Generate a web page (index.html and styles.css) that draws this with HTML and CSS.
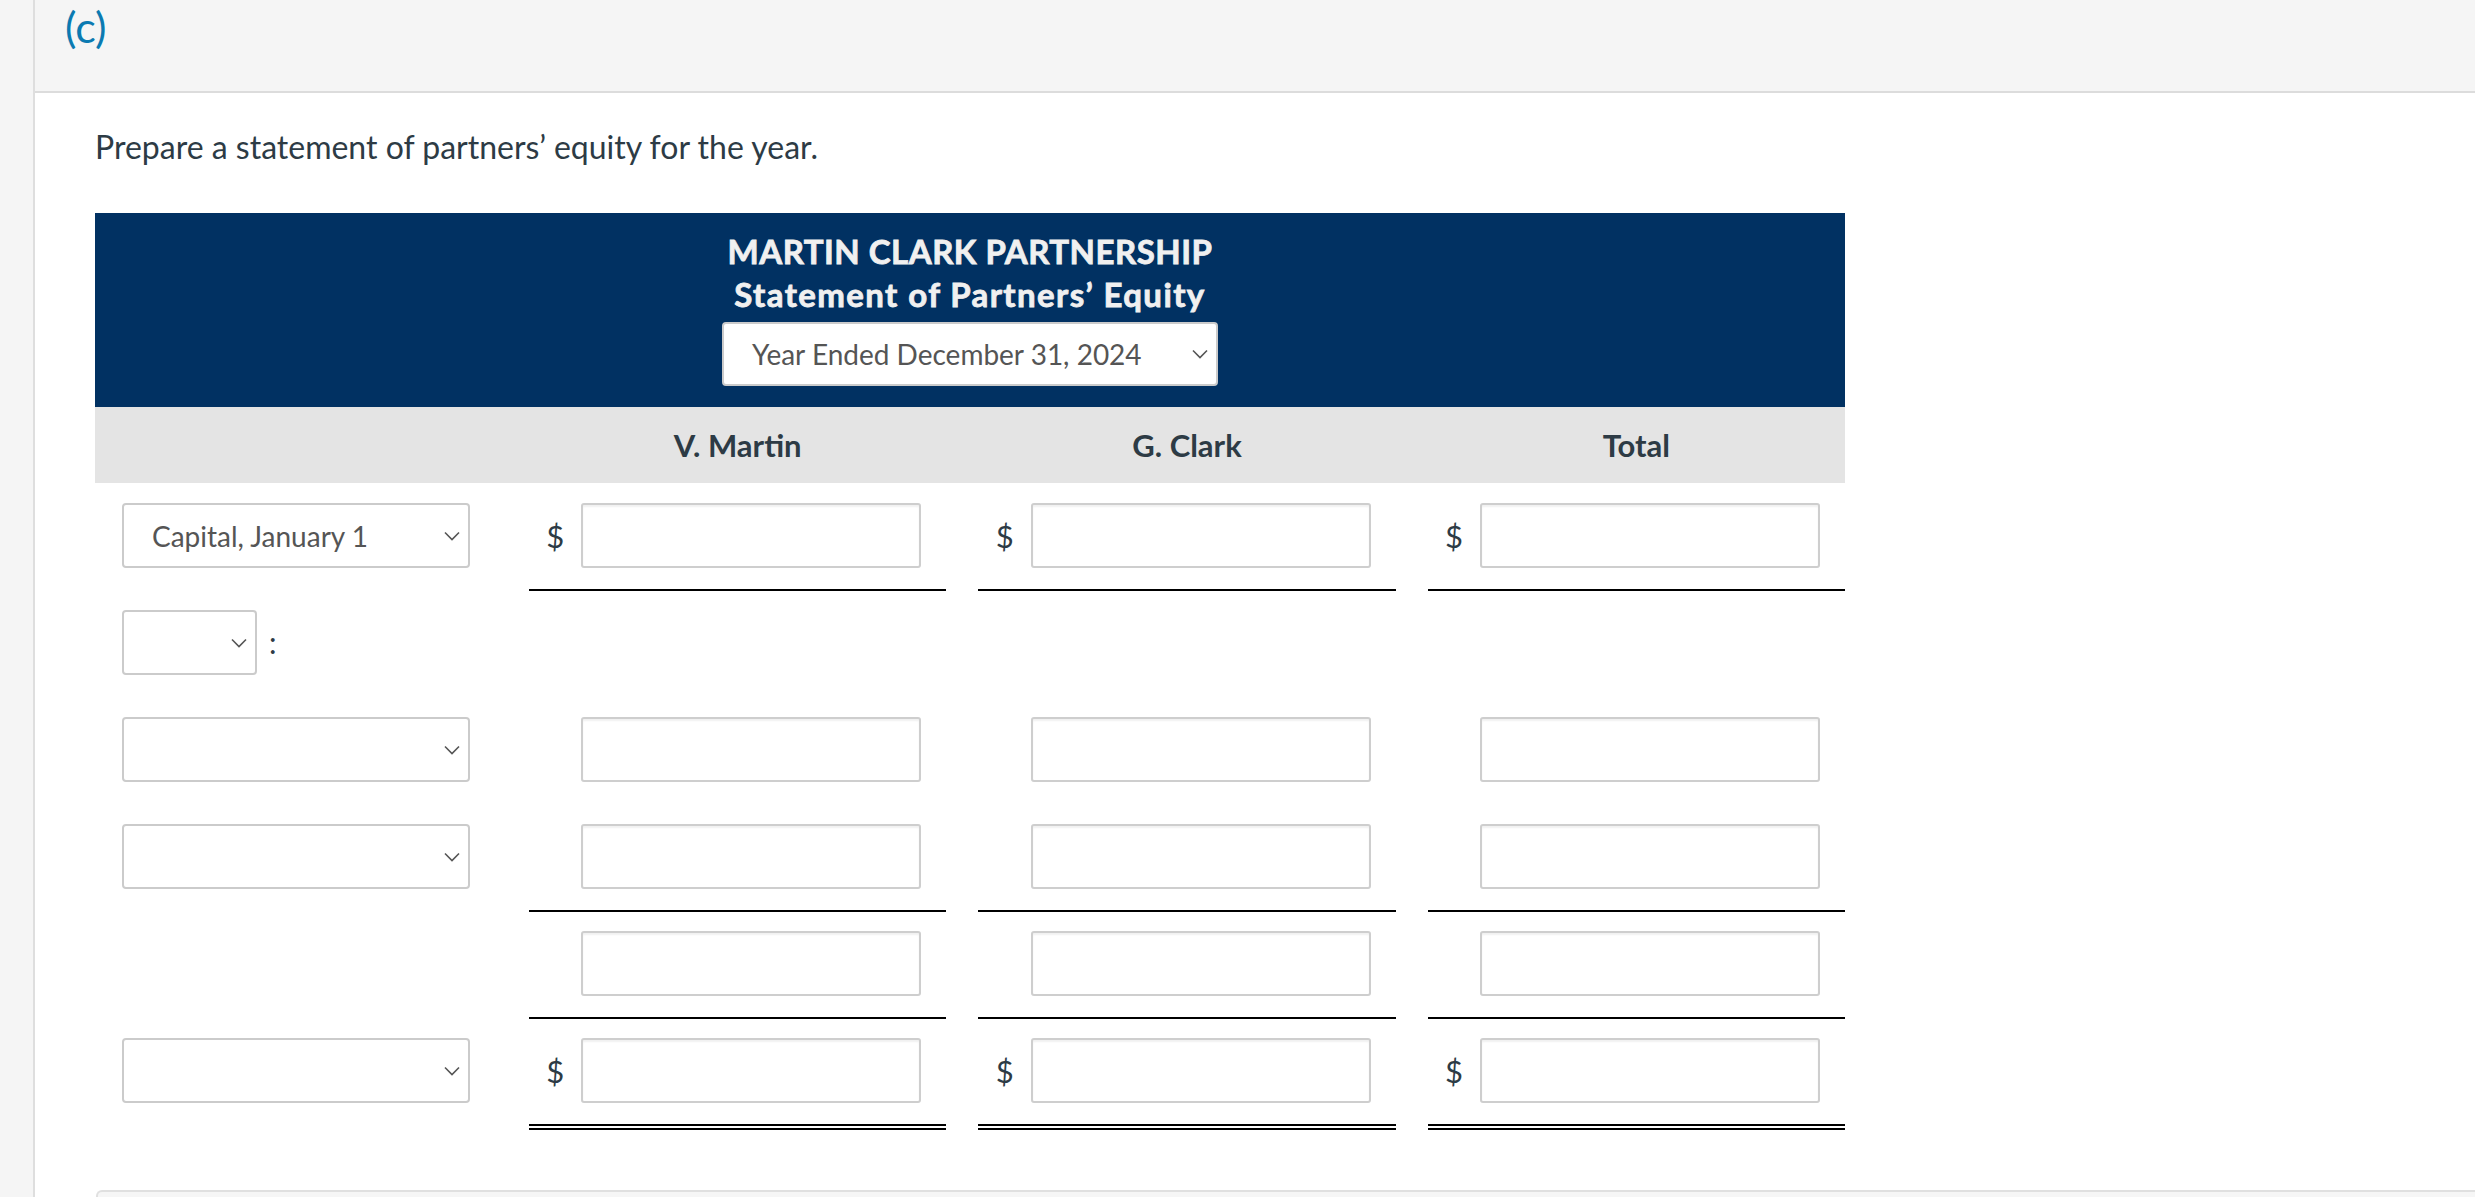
FILE: index.html
```html
<!DOCTYPE html>
<html lang="en">
<head>
<meta charset="utf-8">
<title>Statement of Partners' Equity</title>
<link rel="stylesheet" href="styles.css">
</head>
<body>
<div class="page">
  <aside class="gutter"></aside>
  <main class="main">
    <header class="part-header"><span class="part-label">(c)</span></header>
    <section class="content">
      <p class="prompt">Prepare a statement of partners’ equity for the year.</p>
      <div class="statement">
        <div class="statement-head">
          <div class="title title-company">MARTIN CLARK PARTNERSHIP</div>
          <div class="title title-report">Statement of Partners’ Equity</div>
          <div class="select date-select"><span>Year Ended December 31, 2024</span><svg class="chev" viewBox="0 0 16 10"><path d="M1 1.5 L8 8.5 L15 1.5"/></svg></div>
        </div>
        <div class="grid col-head">
          <div></div>
          <div class="ch">V. Martin</div>
          <div class="ch">G. Clark</div>
          <div class="ch">Total</div>
        </div>
        <div class="rows">
          <div class="grid row">
            <div class="label"><div class="select wide"><span>Capital, January 1</span><svg class="chev" viewBox="0 0 16 10"><path d="M1 1.5 L8 8.5 L15 1.5"/></svg></div></div>
            <div class="cell line"><span class="dollar">$</span><div class="input"></div></div>
            <div class="cell line"><span class="dollar">$</span><div class="input"></div></div>
            <div class="cell line"><span class="dollar">$</span><div class="input"></div></div>
          </div>
          <div class="grid row">
            <div class="label"><div class="select narrow"><span></span><svg class="chev" viewBox="0 0 16 10"><path d="M1 1.5 L8 8.5 L15 1.5"/></svg></div><span class="colon">:</span></div>
            <div class="cell"></div>
            <div class="cell"></div>
            <div class="cell"></div>
          </div>
          <div class="grid row">
            <div class="label"><div class="select wide"><span></span><svg class="chev" viewBox="0 0 16 10"><path d="M1 1.5 L8 8.5 L15 1.5"/></svg></div></div>
            <div class="cell"><div class="input"></div></div>
            <div class="cell"><div class="input"></div></div>
            <div class="cell"><div class="input"></div></div>
          </div>
          <div class="grid row">
            <div class="label"><div class="select wide"><span></span><svg class="chev" viewBox="0 0 16 10"><path d="M1 1.5 L8 8.5 L15 1.5"/></svg></div></div>
            <div class="cell line"><div class="input"></div></div>
            <div class="cell line"><div class="input"></div></div>
            <div class="cell line"><div class="input"></div></div>
          </div>
          <div class="grid row">
            <div class="label"></div>
            <div class="cell line"><div class="input"></div></div>
            <div class="cell line"><div class="input"></div></div>
            <div class="cell line"><div class="input"></div></div>
          </div>
          <div class="grid row">
            <div class="label"><div class="select wide"><span></span><svg class="chev" viewBox="0 0 16 10"><path d="M1 1.5 L8 8.5 L15 1.5"/></svg></div></div>
            <div class="cell double"><span class="dollar">$</span><div class="input"></div></div>
            <div class="cell double"><span class="dollar">$</span><div class="input"></div></div>
            <div class="cell double"><span class="dollar">$</span><div class="input"></div></div>
          </div>
        </div>
      </div>
      <div class="next-card"></div>
    </section>
  </main>
</div>
</body>
</html>
```

FILE: styles.css
```css
* { box-sizing: border-box; }

html, body {
  margin: 0;
  padding: 0;
  height: 100%;
  overflow: hidden;
  background: #ffffff;
}

body {
  font-family: Lato, "Open Sans", "Liberation Sans", sans-serif;
  color: #2d3b45;
}

.page {
  display: flex;
  min-height: 100vh;
}

.gutter {
  flex: 0 0 35px;
  background: #f5f5f5;
  border-right: 2px solid #dedede;
}

.main {
  flex: 1 1 auto;
  min-width: 0;
}

.part-header {
  height: 93px;
  background: #f5f5f5;
  border-bottom: 2px solid #dcdcdc;
  padding: 3px 0 0 30px;
}

.part-label {
  font-size: 43px;
  line-height: 48px;
  font-weight: 400;
  color: #0b7ab1;
}

.content {
  padding-left: 60px;
}

.prompt {
  margin: 0;
  padding-top: 35px;
  font-size: 32px;
  line-height: 38px;
  height: 120px;
}

.statement {
  width: 1750px;
}

.statement-head {
  background: #013162;
  padding: 17px 0 21px;
  display: flex;
  flex-direction: column;
  align-items: center;
}

.title {
  color: #f0f0f0;
  font-weight: 700;
  font-size: 33px;
  line-height: 43px;
  -webkit-text-stroke: 0.8px #f0f0f0;
}

.title-company { letter-spacing: 0.5px; }
.title-report { letter-spacing: 1.4px; }

.select {
  display: flex;
  align-items: center;
  justify-content: space-between;
  height: 65px;
  background: #ffffff;
  border: 2px solid #cbcbcb;
  border-radius: 4px;
  padding: 0 8px 0 28px;
  font-size: 28px;
  color: #555555;
}

.date-select {
  width: 496px;
  height: 64px;
  margin-top: 6px;
}

.chev {
  width: 16px;
  height: 10px;
  flex: 0 0 auto;
}

.chev path {
  fill: none;
  stroke: #555555;
  stroke-width: 1.6;
}

.grid {
  display: grid;
  grid-template-columns: 402px repeat(3, 1fr);
  column-gap: 32px;
}

.col-head {
  background: #e4e4e4;
  height: 76px;
  align-items: center;
}

.ch {
  text-align: center;
  font-weight: 700;
  font-size: 31px;
  color: #2d3b45;
}

.rows {
  padding-top: 20px;
}

.row {
  margin-bottom: 19px;
}

.label {
  display: flex;
  align-items: flex-start;
  padding-left: 27px;
}

.select.wide { width: 348px; }
.select.narrow { width: 135px; }

.colon {
  margin-left: 12px;
  font-size: 30px;
  line-height: 65px;
}

.cell {
  display: flex;
  justify-content: flex-end;
  align-items: center;
  padding: 0 25px 21px 0;
  border-bottom: 2px solid transparent;
  min-height: 88px;
}

.cell.line { border-bottom-color: #000000; }

.cell.double {
  border-bottom: 6px double #000000;
}

.dollar {
  font-size: 31px;
  margin-right: 17px;
  color: #2d3b45;
}

.input {
  width: 340px;
  height: 65px;
  background: #ffffff;
  border: 2px solid #cecece;
  border-radius: 3px;
  box-shadow: inset 0 2px 2px rgba(0, 0, 0, 0.06);
}

.next-card {
  margin-top: 60px;
  margin-left: 1px;
  height: 60px;
  background: #f6f6f6;
  border: 2px solid #e0e0e0;
  border-right: none;
  border-radius: 6px 0 0 0;
}
```
